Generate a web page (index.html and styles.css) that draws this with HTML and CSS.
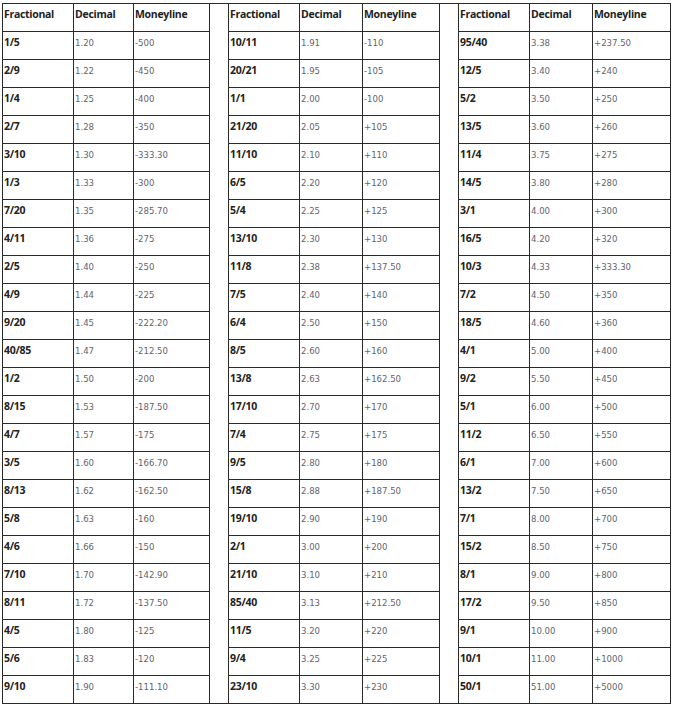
FILE: index.html
```html
<!DOCTYPE html>
<html>
<head>
<meta charset="utf-8">
<link rel="stylesheet" href="styles.css">
</head>
<body>
<table class="odds">
<colgroup>
<col class="c-frac"><col class="c-dec"><col class="c-ml1">
<col class="c-gap">
<col class="c-frac"><col class="c-dec2"><col class="c-ml2">
<col class="c-gap">
<col class="c-frac"><col class="c-dec2"><col class="c-ml3">
</colgroup>
<tbody id="body">
<tr>
<th>Fractional</th><th>Decimal</th><th>Moneyline</th>
<td class="gap" rowspan="25"></td>
<th>Fractional</th><th>Decimal</th><th>Moneyline</th>
<td class="gap" rowspan="25"></td>
<th>Fractional</th><th>Decimal</th><th>Moneyline</th>
</tr>
<tr><td class="f">1/5</td><td>1.20</td><td>-500</td><td class="f">10/11</td><td>1.91</td><td>-110</td><td class="f">95/40</td><td>3.38</td><td>+237.50</td></tr>
<tr><td class="f">2/9</td><td>1.22</td><td>-450</td><td class="f">20/21</td><td>1.95</td><td>-105</td><td class="f">12/5</td><td>3.40</td><td>+240</td></tr>
<tr><td class="f">1/4</td><td>1.25</td><td>-400</td><td class="f">1/1</td><td>2.00</td><td>-100</td><td class="f">5/2</td><td>3.50</td><td>+250</td></tr>
<tr><td class="f">2/7</td><td>1.28</td><td>-350</td><td class="f">21/20</td><td>2.05</td><td>+105</td><td class="f">13/5</td><td>3.60</td><td>+260</td></tr>
<tr><td class="f">3/10</td><td>1.30</td><td>-333.30</td><td class="f">11/10</td><td>2.10</td><td>+110</td><td class="f">11/4</td><td>3.75</td><td>+275</td></tr>
<tr><td class="f">1/3</td><td>1.33</td><td>-300</td><td class="f">6/5</td><td>2.20</td><td>+120</td><td class="f">14/5</td><td>3.80</td><td>+280</td></tr>
<tr><td class="f">7/20</td><td>1.35</td><td>-285.70</td><td class="f">5/4</td><td>2.25</td><td>+125</td><td class="f">3/1</td><td>4.00</td><td>+300</td></tr>
<tr><td class="f">4/11</td><td>1.36</td><td>-275</td><td class="f">13/10</td><td>2.30</td><td>+130</td><td class="f">16/5</td><td>4.20</td><td>+320</td></tr>
<tr><td class="f">2/5</td><td>1.40</td><td>-250</td><td class="f">11/8</td><td>2.38</td><td>+137.50</td><td class="f">10/3</td><td>4.33</td><td>+333.30</td></tr>
<tr><td class="f">4/9</td><td>1.44</td><td>-225</td><td class="f">7/5</td><td>2.40</td><td>+140</td><td class="f">7/2</td><td>4.50</td><td>+350</td></tr>
<tr><td class="f">9/20</td><td>1.45</td><td>-222.20</td><td class="f">6/4</td><td>2.50</td><td>+150</td><td class="f">18/5</td><td>4.60</td><td>+360</td></tr>
<tr><td class="f">40/85</td><td>1.47</td><td>-212.50</td><td class="f">8/5</td><td>2.60</td><td>+160</td><td class="f">4/1</td><td>5.00</td><td>+400</td></tr>
<tr><td class="f">1/2</td><td>1.50</td><td>-200</td><td class="f">13/8</td><td>2.63</td><td>+162.50</td><td class="f">9/2</td><td>5.50</td><td>+450</td></tr>
<tr><td class="f">8/15</td><td>1.53</td><td>-187.50</td><td class="f">17/10</td><td>2.70</td><td>+170</td><td class="f">5/1</td><td>6.00</td><td>+500</td></tr>
<tr><td class="f">4/7</td><td>1.57</td><td>-175</td><td class="f">7/4</td><td>2.75</td><td>+175</td><td class="f">11/2</td><td>6.50</td><td>+550</td></tr>
<tr><td class="f">3/5</td><td>1.60</td><td>-166.70</td><td class="f">9/5</td><td>2.80</td><td>+180</td><td class="f">6/1</td><td>7.00</td><td>+600</td></tr>
<tr><td class="f">8/13</td><td>1.62</td><td>-162.50</td><td class="f">15/8</td><td>2.88</td><td>+187.50</td><td class="f">13/2</td><td>7.50</td><td>+650</td></tr>
<tr><td class="f">5/8</td><td>1.63</td><td>-160</td><td class="f">19/10</td><td>2.90</td><td>+190</td><td class="f">7/1</td><td>8.00</td><td>+700</td></tr>
<tr><td class="f">4/6</td><td>1.66</td><td>-150</td><td class="f">2/1</td><td>3.00</td><td>+200</td><td class="f">15/2</td><td>8.50</td><td>+750</td></tr>
<tr><td class="f">7/10</td><td>1.70</td><td>-142.90</td><td class="f">21/10</td><td>3.10</td><td>+210</td><td class="f">8/1</td><td>9.00</td><td>+800</td></tr>
<tr><td class="f">8/11</td><td>1.72</td><td>-137.50</td><td class="f">85/40</td><td>3.13</td><td>+212.50</td><td class="f">17/2</td><td>9.50</td><td>+850</td></tr>
<tr><td class="f">4/5</td><td>1.80</td><td>-125</td><td class="f">11/5</td><td>3.20</td><td>+220</td><td class="f">9/1</td><td>10.00</td><td>+900</td></tr>
<tr><td class="f">5/6</td><td>1.83</td><td>-120</td><td class="f">9/4</td><td>3.25</td><td>+225</td><td class="f">10/1</td><td>11.00</td><td>+1000</td></tr>
<tr><td class="f">9/10</td><td>1.90</td><td>-111.10</td><td class="f">23/10</td><td>3.30</td><td>+230</td><td class="f">50/1</td><td>51.00</td><td>+5000</td></tr>
</tbody>
</table>
</body>
</html>
```
FILE: styles.css
```css
html, body {
  margin: 0;
  padding: 0;
  background: #ffffff;
}
body {
  padding: 3px 0 0 2px;
}
.odds {
  border-collapse: collapse;
  table-layout: fixed;
  width: 669px;
}
.c-frac { width: 71px; }
.c-dec { width: 60px; }
.c-dec2 { width: 63px; }
.c-ml1 { width: 76px; }
.c-ml2 { width: 77px; }
.c-ml3 { width: 78px; }
.c-gap { width: 19px; }
.odds th,
.odds td {
  border: 1px solid #2a2a2a;
  height: 28px;
  padding: 4px 1px 0 1px;
  box-sizing: border-box;
  vertical-align: top;
  text-align: left;
  line-height: 13px;
  font-family: "DejaVu Sans Condensed", "DejaVu Sans", sans-serif;
  font-stretch: condensed;
  font-size: 9.5px;
  color: #5f6470;
  white-space: nowrap;
}
.odds th,
.odds td.f {
  font-family: "Open Sans", sans-serif;
  font-stretch: normal;
  font-weight: 700;
  font-size: 10.5px;
  letter-spacing: -0.3px;
  color: #222222;
}
.odds td.gap {
  padding: 0;
}
```
